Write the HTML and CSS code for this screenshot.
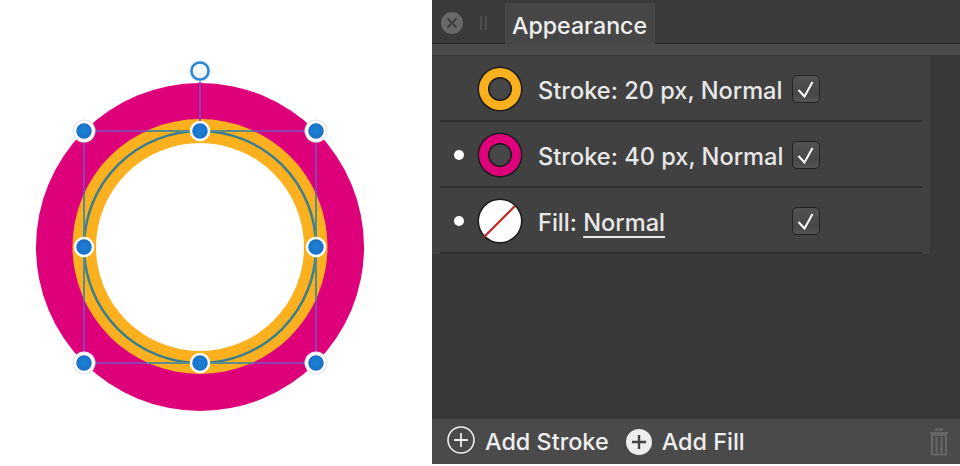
FILE: index.html
```html
<!DOCTYPE html>
<html>
  <head>
    <meta charset="utf-8"/>
    <title>Appearance</title>
    <link rel="stylesheet" href="styles.css">
  </head>
  <body>
    <div class="page">
      <div class="canvas">
        <svg class="artwork" width="432" height="466" viewBox="0 0 432 466">
          <defs>
            <radialGradient id="handle-blue" cx="50%" cy="50%" r="55%">
              <stop offset="0" stop-color="#1f80d6"/>
              <stop offset=".7" stop-color="#1a74c8"/>
              <stop offset="1" stop-color="#0f559f"/>
            </radialGradient>
          </defs>
          <circle cx="200" cy="247" r="164" fill="#de007b"/>
          <circle cx="200" cy="246.500" r="127.500" fill="#fbb01f"/>
          <circle cx="200" cy="247" r="104" fill="#fff"/>
          <circle cx="200" cy="247" r="116" fill="none" stroke="#3b7f8f" stroke-width="2.500"/>
          <path d="M84 131H316V363H84Z M200 131V71" fill="none" stroke="#8f3fae" stroke-width="2"/>
          <path d="M147 131H253 M147 363H253 M84 194V300 M316 194V300" fill="none" stroke="#5f8a8a" stroke-width="2"/>
          <circle cx="200" cy="71" r="11" fill="#d9ebf8" opacity=".8"/>
          <circle cx="200" cy="71" r="8.500" fill="#f4f8fb" stroke="#2b86cf" stroke-width="2.500"/>
          <g class="halos">
            <circle cx="84" cy="131" r="11.500"/>
            <circle cx="316" cy="131" r="11.500"/>
            <circle cx="84" cy="363" r="11.500"/>
            <circle cx="316" cy="363" r="11.500"/>
          </g>
          <g class="handles" fill="url(#handle-blue)">
            <circle cx="84" cy="131" r="9"/>
            <circle cx="200" cy="131" r="9"/>
            <circle cx="316" cy="131" r="9"/>
            <circle cx="84" cy="247" r="9"/>
            <circle cx="316" cy="247" r="9"/>
            <circle cx="84" cy="363" r="9"/>
            <circle cx="200" cy="363" r="9"/>
            <circle cx="316" cy="363" r="9"/>
          </g>
        </svg>
      </div>

      <div class="panel">
        <div class="tabs">
          <div class="tab-controls">
            <svg width="22" height="22" viewBox="0 0 22 22">
              <circle cx="11" cy="11" r="11" fill="#696969"/>
              <path d="M6.500 6.500L15.500 15.500M15.500 6.500L6.500 15.500" stroke="#3c3c3c" stroke-width="1.800"/>
            </svg>
            <span class="grip"></span>
          </div>
          <div class="tab">Appearance</div>
        </div>
        <div class="band"></div>

        <div class="body">
          <div class="list">
            <div class="row">
              <span class="dot dot--off"></span>
              <svg class="swatch" width="46" height="46" viewBox="0 0 46 46">
                <circle cx="23" cy="23" r="22.500" fill="#1a1a1a"/>
                <circle cx="23" cy="23" r="21" fill="#fbb01f"/>
                <circle cx="23" cy="23" r="12" fill="#1a1a1a"/>
                <circle cx="23" cy="23" r="10.500" fill="#474747"/>
              </svg>
              <span class="label label--wide">Stroke: 20 px, Normal</span>
              <span class="check">
                <svg width="18" height="18" viewBox="0 0 18 18"><path d="M1.500 10L7.500 16.500L15.500 2" fill="none" stroke="#fff" stroke-width="2"/></svg>
              </span>
            </div>
            <div class="row">
              <span class="dot"></span>
              <svg class="swatch" width="46" height="46" viewBox="0 0 46 46">
                <circle cx="23" cy="23" r="22.500" fill="#1a1a1a"/>
                <circle cx="23" cy="23" r="21" fill="#de007b"/>
                <circle cx="23" cy="23" r="12" fill="#1a1a1a"/>
                <circle cx="23" cy="23" r="10.500" fill="#474747"/>
              </svg>
              <span class="label label--wide">Stroke: 40 px, Normal</span>
              <span class="check">
                <svg width="18" height="18" viewBox="0 0 18 18"><path d="M1.500 10L7.500 16.500L15.500 2" fill="none" stroke="#fff" stroke-width="2"/></svg>
              </span>
            </div>
            <div class="row">
              <span class="dot"></span>
              <svg class="swatch" width="46" height="46" viewBox="0 0 46 46">
                <circle cx="23" cy="23" r="22.500" fill="#1a1a1a"/>
                <circle cx="23" cy="23" r="21" fill="#fff"/>
                <path d="M7 39L38 8" stroke="#c4201f" stroke-width="2"/>
              </svg>
              <span class="label label--wide">Fill: <u>Normal</u></span>
              <span class="check">
                <svg width="18" height="18" viewBox="0 0 18 18"><path d="M1.500 10L7.500 16.500L15.500 2" fill="none" stroke="#fff" stroke-width="2"/></svg>
              </span>
            </div>
          </div>
          <div class="scroll"></div>
        </div>

        <div class="footer">
          <span class="action">
            <svg class="action-icon" width="28" height="28" viewBox="0 0 28 28">
              <circle cx="14" cy="14" r="13" fill="none" stroke="#eee" stroke-width="1.600"/>
              <path d="M14 7V21M7 14H21" stroke="#eee" stroke-width="1.800"/>
            </svg>
            Add Stroke
          </span>
          <span class="action">
            <svg width="26" height="26" viewBox="0 0 26 26">
              <circle cx="13" cy="13" r="13" fill="#eee"/>
              <path d="M13 6V20M6 13H20" stroke="#444" stroke-width="2.400"/>
            </svg>
            Add Fill
          </span>
          <svg class="trash" width="20" height="28" viewBox="0 0 20 28">
            <path d="M7 3V1.500H13V3M1 5H19M3 7H17V26.500H3Z" fill="none" stroke="#666" stroke-width="2"/>
            <path d="M7.500 9V25M12.500 9V25" stroke="#666" stroke-width="2"/>
          </svg>
        </div>
      </div>
    </div>
  </body>
</html>
```

FILE: styles.css
```css
html, body {
  margin: 0;
  padding: 0;
  height: 100%;
  background-color: #fff;
  overflow: hidden;
}

.page {
  display: flex;
  width: 960px;
  height: 466px;
  font-family: Inter, "Liberation Sans", sans-serif;
  font-weight: 500;
}

.canvas {
  width: 432px;
  flex: none;
}

.artwork { display: block; }

.handles circle {
  stroke: #fff;
  stroke-width: 2.500;
}

.halos circle { fill: #e3e8ec; }

.panel {
  display: flex;
  flex-direction: column;
  flex: 1;
  height: 464px;
  background-color: #383838;
  color: #eee;
}

.tabs {
  display: flex;
  height: 40px;
  flex: none;
  padding-top: 3px;
  background-color: #3a3a3a;
  border-bottom: 1px solid #232323;
}

.tab-controls {
  display: flex;
  align-items: center;
  gap: 17px;
  width: 73px;
  padding-left: 9px;
  box-sizing: border-box;
}

.grip {
  width: 3px;
  height: 14px;
  border-left: 2px solid #4c4c4c;
  border-right: 2px solid #4c4c4c;
}

.tab {
  width: 150px;
  box-sizing: border-box;
  margin-bottom: -1px;
  padding-left: 7px;
  background-color: #464646;
  font-size: 23.200px;
  line-height: 47px;
  color: #f0f0f0;
}

.band {
  height: 11px;
  flex: none;
  background-color: #4a4a4a;
  border-bottom: 1px solid #3a3a3a;
}

.body {
  display: flex;
  flex: 1;
  min-height: 0;
}

.list {
  width: 498px;
  height: 198px;
  flex: none;
  box-sizing: border-box;
  padding-left: 8px;
  background-color: #414141;
}

.row {
  display: flex;
  align-items: center;
  width: 482px;
  height: 66px;
  padding-top: 2px;
  border-bottom: 2px solid #2f2f2f;
  box-sizing: border-box;
}

.dot {
  width: 10px;
  height: 10px;
  margin-left: 14px;
  margin-right: 13px;
  border-radius: 50%;
  background-color: #fff;
  flex: none;
}

.dot--off { visibility: hidden; }

.swatch { flex: none; }

.label {
  margin-left: 15px;
  padding-top: 2px;
  font-size: 23.600px;
  white-space: nowrap;
  color: #e8e8e8;
}

.label--wide { width: 254px; }

.label u {
  text-decoration-thickness: 2px;
  text-underline-offset: 5px;
}

.check {
  display: flex;
  align-items: center;
  justify-content: center;
  width: 28px;
  height: 28px;
  box-sizing: border-box;
  border: 1px solid #222;
  border-radius: 5px;
  background: linear-gradient(#525252, #474747 70%, #555);
  flex: none;
}

.scroll { flex: 1; }

.footer {
  display: flex;
  align-items: center;
  height: 45px;
  flex: none;
  padding-left: 15px;
  gap: 17px;
  background-color: #4a4a4a;
  font-size: 23.400px;
  color: #eee;
}

.action {
  display: flex;
  align-items: center;
  gap: 10px;
}

.action-icon { margin-top: -4px; }

.trash { margin-left: auto; margin-right: 11px; }
```
